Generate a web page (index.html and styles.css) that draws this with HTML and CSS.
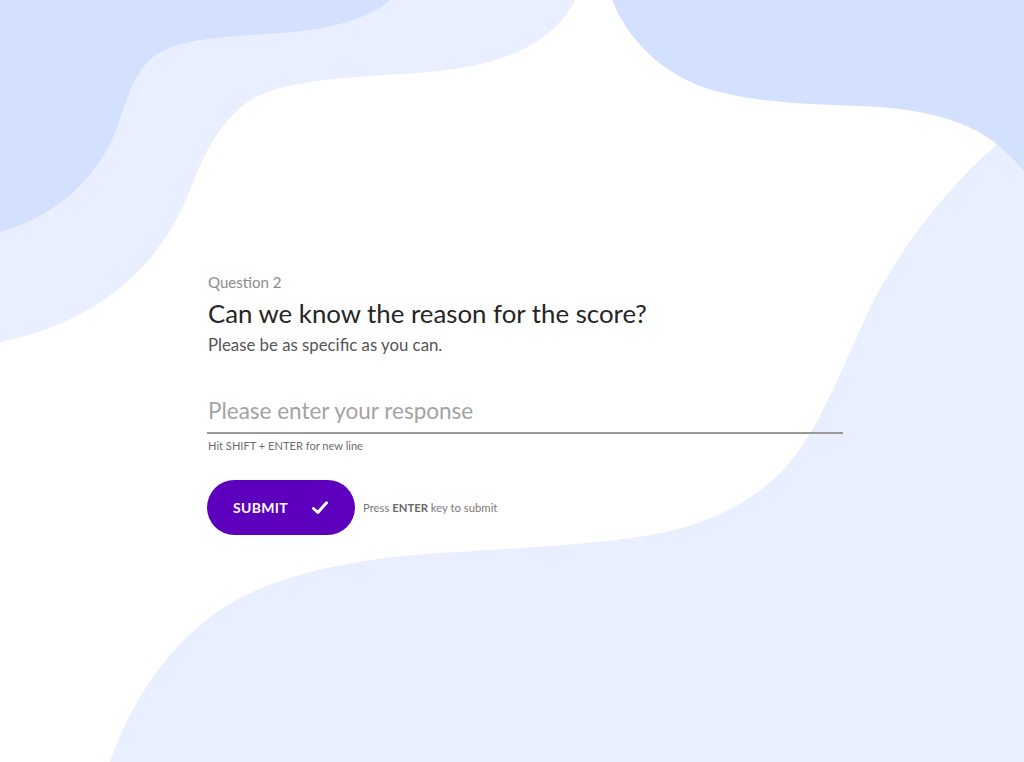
FILE: index.html
```html
<!DOCTYPE html>
<html lang="en">
<head>
<meta charset="utf-8">
<title>Question 2</title>
<link rel="stylesheet" href="styles.css">
</head>
<body>
<div class="page">
  <svg class="bg" width="1024" height="762" viewBox="0 0 1024 762" aria-hidden="true">
    <path class="light" d="M0 0 H575 C555 40 510 65 430 72 C360 77 300 78 260 95 C225 112 205 150 190 190 C165 255 110 320 0 342 Z"/>
    <path class="dark" d="M0 0 H390 C365 22 320 31 268 34 C215 37 175 40 153 57 C135 72 128 95 118 125 C100 175 60 215 0 232 Z"/>
    <path class="light" d="M1024 125 C1015 132 1006 137 997 144 C940 195 890 260 860 330 C835 385 815 435 785 468 C755 500 710 525 650 535 C590 545 520 548 440 553 C360 558 290 572 240 598 C180 630 135 690 110 762 H1024 Z"/>
    <path class="dark" d="M612 0 C630 45 670 80 720 92 C760 102 800 104 860 106 C920 108 970 120 1000 147 C1010 156 1018 163 1024 172 V0 Z"/>
  </svg>
  <main class="form">
    <div class="qnum">Question 2</div>
    <h1 class="title">Can we know the reason for the score?</h1>
    <p class="desc">Please be as specific as you can.</p>
    <div class="field">
      <div class="placeholder">Please enter your response</div>
    </div>
    <div class="hint">Hit SHIFT + ENTER for new line</div>
    <div class="actions">
      <button class="submit" type="button">
        <span>SUBMIT</span>
        <svg class="check" width="16" height="14" viewBox="0 0 16 14" aria-hidden="true"><path d="M1.5 7.5 L5.8 11.5 L14.5 1.8" fill="none" stroke="#fff" stroke-width="3" stroke-linecap="round" stroke-linejoin="round"/></svg>
      </button>
      <div class="enter">Press <b>ENTER</b> key to submit</div>
    </div>
  </main>
</div>
</body>
</html>
```

FILE: styles.css
```css
html, body {
  margin: 0;
  padding: 0;
}
body {
  font-family: Lato, "Noto Sans", sans-serif;
  background: #ffffff;
}
.page {
  position: relative;
  width: 1024px;
  height: 762px;
  overflow: hidden;
}
.bg {
  position: absolute;
  left: 0;
  top: 0;
}
.bg .dark { fill: #d3e0fe; }
.bg .light { fill: #e9effe; }
.form {
  position: relative;
  width: 636px;
  margin-left: 207px;
  padding-top: 272px;
  display: flex;
  flex-direction: column;
}
.qnum {
  font-size: 15px;
  color: #8c8c8c;
  line-height: 20px;
  padding-left: 1px;
}
.title {
  margin: 5px 0 0;
  font-size: 25.8px;
  font-weight: 400;
  color: #262626;
  line-height: 32px;
  padding-left: 1px;
}
.desc {
  margin: 5px 0 0;
  font-size: 16.8px;
  color: #555555;
  line-height: 22px;
  padding-left: 1px;
}
.field {
  margin-top: 39px;
  border-bottom: 2px solid #9a9a9a;
  padding-bottom: 5px;
}
.placeholder {
  font-size: 22.5px;
  color: #a3a3a3;
  line-height: 32px;
  padding-left: 1px;
}
.hint {
  margin-top: 5px;
  font-size: 11.1px;
  color: #6e6e6e;
  line-height: 14px;
  padding-left: 1px;
}
.actions {
  margin-top: 27px;
  display: flex;
  align-items: center;
  gap: 8px;
}
.submit {
  width: 148px;
  height: 55px;
  border: none;
  border-radius: 28px;
  background: #5c00bd;
  color: #ffffff;
  font-family: Lato, "Noto Sans", sans-serif;
  font-weight: 700;
  font-size: 14px;
  letter-spacing: 0.3px;
  display: flex;
  align-items: center;
  padding: 0 27px 0 26px;
  justify-content: space-between;
}
.check {
  display: block;
}
.enter {
  font-size: 11.3px;
  color: #7a7a7a;
}
.enter b {
  color: #6a6a6a;
  font-weight: 700;
}
```
